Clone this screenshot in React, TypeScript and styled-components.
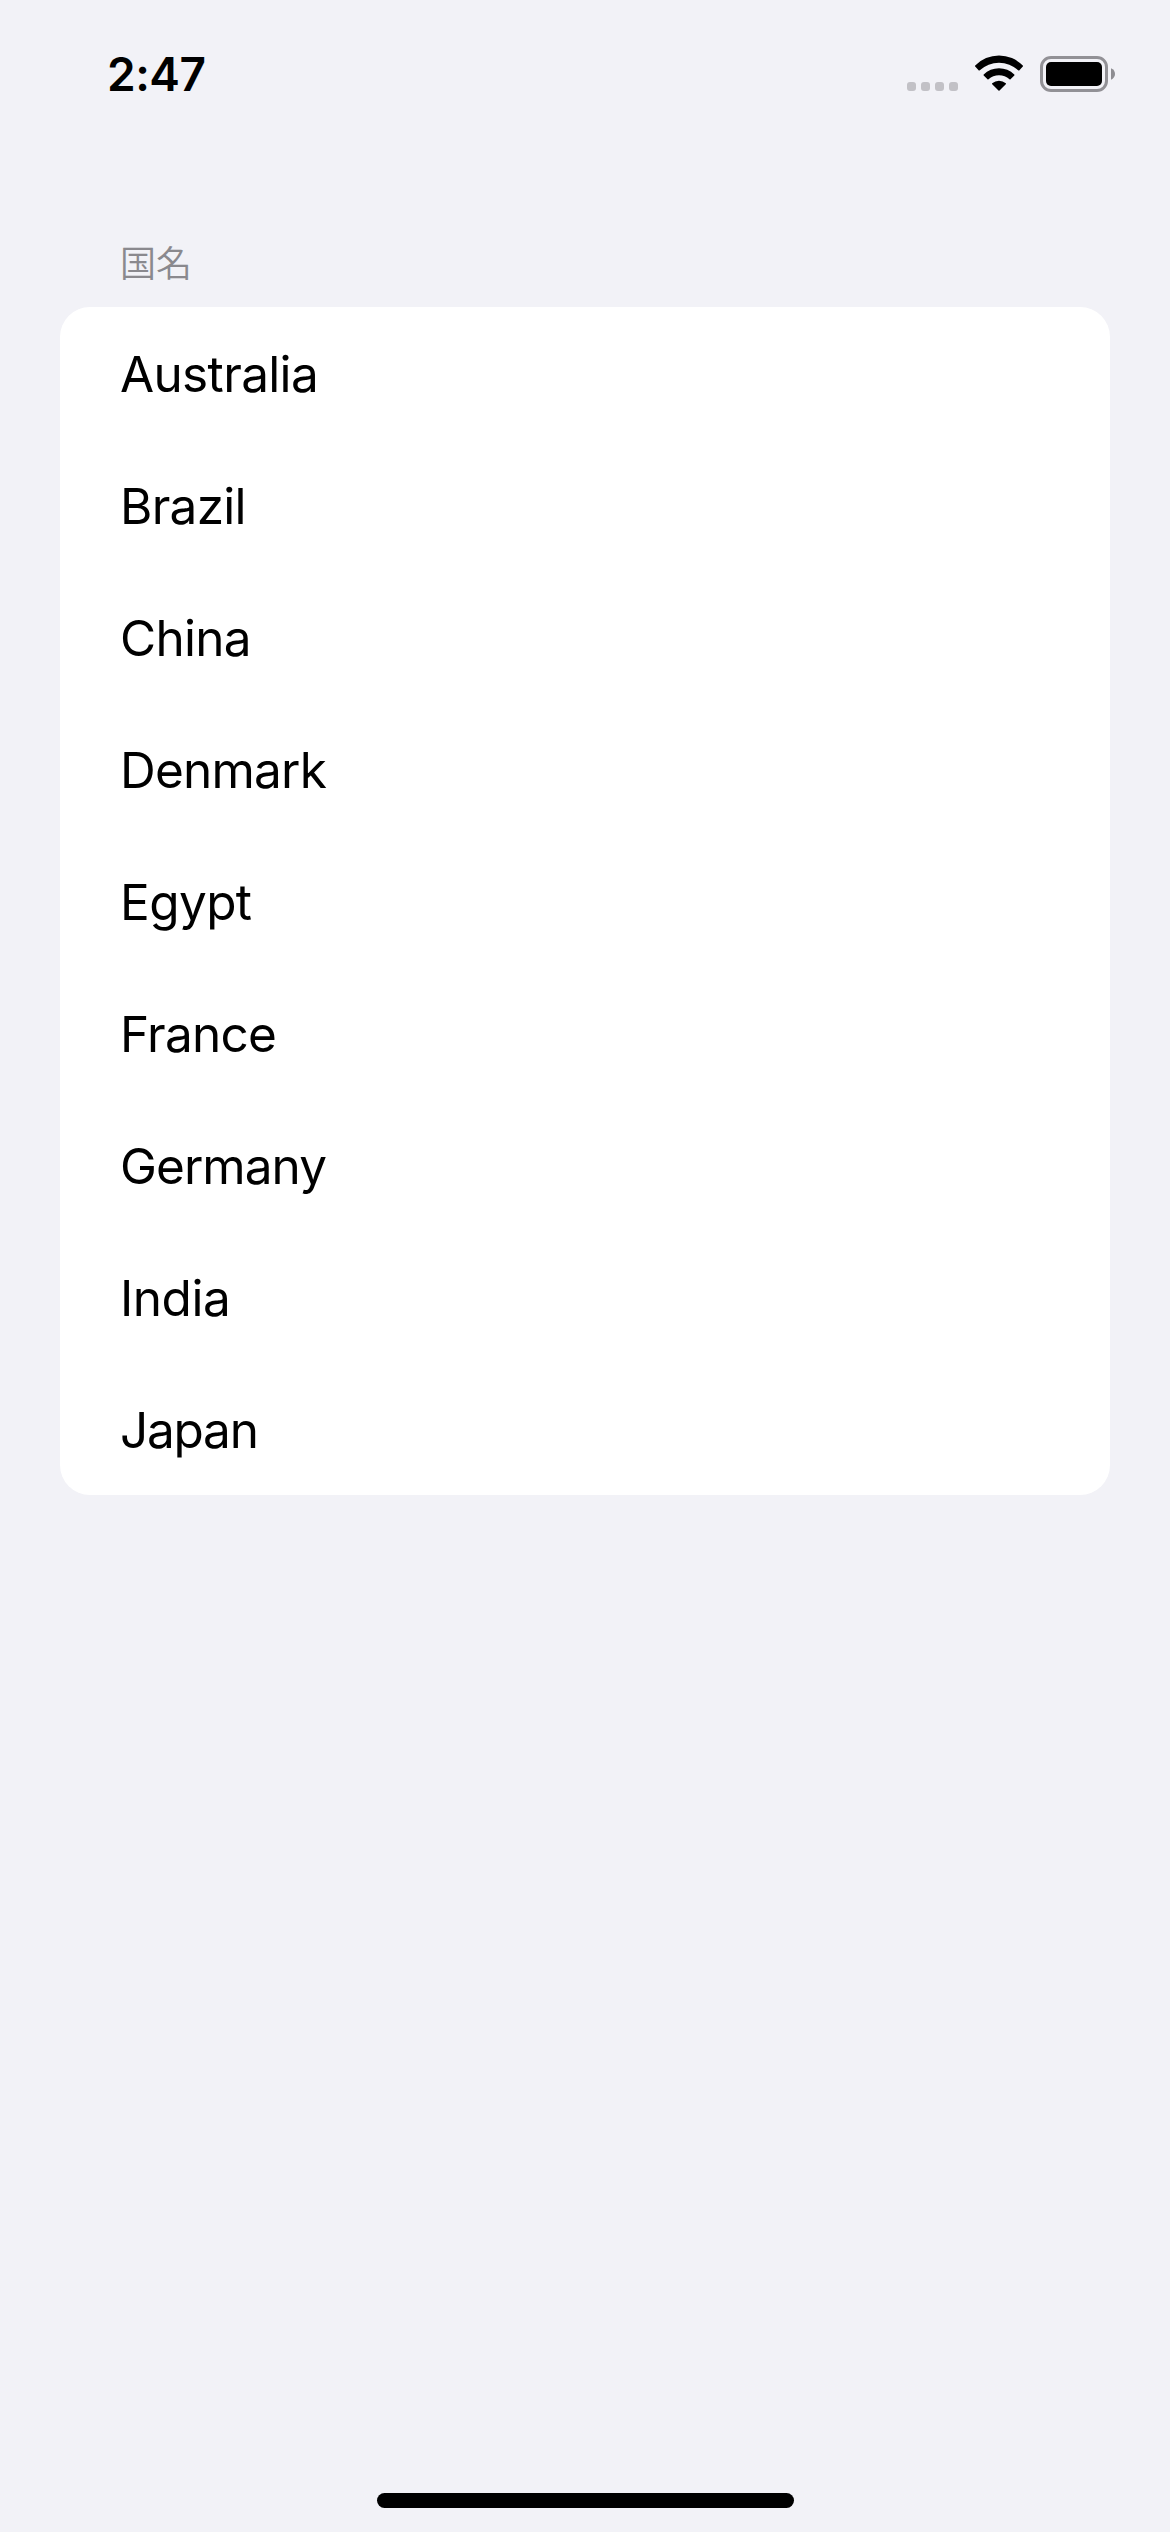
import React from "react";
import styled, { createGlobalStyle } from "styled-components";

const GlobalStyle = createGlobalStyle`
  html, body { margin: 0; padding: 0; background: #f2f2f7; }
  * { box-sizing: border-box; }
`;

const Screen = styled.div`
  display: flex;
  flex-direction: column;
  width: 1170px;
  height: 2532px;
  background: #f2f2f7;
  color: #000;
  font-family: Inter, "Noto Sans CJK JP", sans-serif;
`;

const StatusBar = styled.header`
  display: flex;
  justify-content: space-between;
  align-items: center;
  height: 148px;
  padding: 0 55px 0 107px;
`;

const Clock = styled.time`
  font-size: 46px;
  line-height: 56px;
  font-weight: 600;
  letter-spacing: -0.5px;
`;

const Indicators = styled.div`
  display: flex;
  align-items: flex-end;
  height: 36px;
`;

const Signal = styled.div`
  display: flex;
  gap: 5px;
  margin: 0 17px 1px 0;
`;

const SignalDot = styled.span`
  width: 9px;
  height: 9px;
  border-radius: 3px;
  background: #c2c1c6;
`;

const WifiIcon = styled.svg`
  width: 48px;
  height: 36px;
  margin: 0 17px 1px 0;
`;

const BatteryIcon = styled.svg`
  width: 75px;
  height: 36px;
`;

const Content = styled.main`
  flex: 1;
  display: flex;
  flex-direction: column;
  padding: 87px 60px 0;
`;

const SectionTitle = styled.h2`
  margin: 0;
  padding: 0 60px;
  height: 72px;
  font-family: "Noto Sans CJK JP", sans-serif;
  font-size: 36px;
  line-height: 52px;
  font-weight: 350;
  color: #8a898e;
`;

const Card = styled.ul`
  list-style: none;
  margin: 0;
  padding: 0;
  border-radius: 30px;
  background: #fff;
`;

const Row = styled.li<{ $tracking: number }>`
  display: flex;
  align-items: center;
  height: 132px;
  padding: 1px 60px 0;
  font-size: 49.5px;
  line-height: 60px;
  letter-spacing: ${(p) => p.$tracking}px;
`;

const HomeArea = styled.footer`
  display: flex;
  justify-content: center;
  height: 39px;
`;

const HomeBar = styled.div`
  width: 417px;
  height: 15px;
  border-radius: 8px;
  background: #000;
`;

const countries = [
  { name: "Australia", tracking: -0.65 },
  { name: "Brazil", tracking: -0.73 },
  { name: "China", tracking: -0.74 },
  { name: "Denmark", tracking: -0.78 },
  { name: "Egypt", tracking: -0.6 },
  { name: "France", tracking: -0.74 },
  { name: "Germany", tracking: -0.95 },
  { name: "India", tracking: -0.46 },
  { name: "Japan", tracking: -1.25 },
];

export default function App() {
  return (
    <Screen>
      <GlobalStyle />
      <StatusBar>
        <Clock>2:47</Clock>
        <Indicators>
          <Signal>
            {[0, 1, 2, 3].map((n) => (
              <SignalDot key={n} />
            ))}
          </Signal>
          <WifiIcon viewBox="0 0 48 36">
            <path d="M0.2 10.6A33 33 0 0 1 47.8 10.6Q48.3 11.1 47.8 11.6L44.2 15.4Q43.7 15.8 43.2 15.3A28 28 0 0 0 4.8 15.3Q4.3 15.8 3.8 15.4L0.2 11.6Q-0.3 11.1 0.2 10.6Z" />
            <path d="M8.7 19.4A21.8 21.8 0 0 1 39.3 19.4Q39.8 19.9 39.3 20.4L35.5 24.3Q35 24.7 34.5 24.2A15.6 15.6 0 0 0 13.5 24.2Q13 24.7 12.5 24.3L8.7 20.4Q8.2 19.9 8.7 19.4Z" />
            <path d="M17.2 28.2A10.3 10.3 0 0 1 30.8 28.2Q31.3 28.7 30.8 29.2L24.5 35.6Q24 36 23.5 35.6L17.2 29.2Q16.7 28.7 17.2 28.2Z" />
          </WifiIcon>
          <BatteryIcon viewBox="0 0 75 36">
            <rect x="1.5" y="1.5" width="65" height="33" rx="9.5" fill="none" stroke="#929196" strokeWidth="3" />
            <rect x="6" y="6" width="56" height="24" rx="5" />
            <path d="M71 12.3C73.6 13.4 75 15.6 75 18S73.6 22.6 71 23.7Z" fill="#8e8d92" />
          </BatteryIcon>
        </Indicators>
      </StatusBar>
      <Content>
        <SectionTitle>国名</SectionTitle>
        <Card>
          {countries.map((c) => (
            <Row key={c.name} $tracking={c.tracking}>
              {c.name}
            </Row>
          ))}
        </Card>
      </Content>
      <HomeArea>
        <HomeBar />
      </HomeArea>
    </Screen>
  );
}
